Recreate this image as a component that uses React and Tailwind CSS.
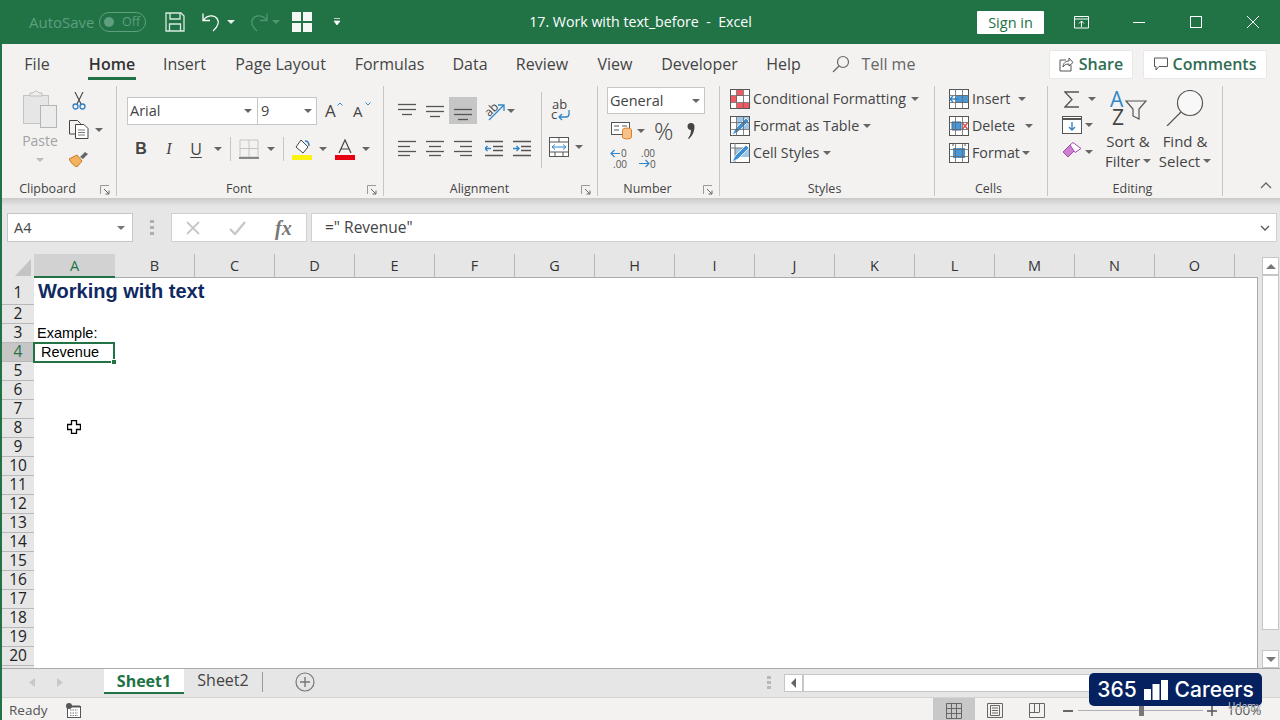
import React from 'react';

const Caret = ({ className = '', color = '#666' }) => (
  <svg width="8" height="4" viewBox="0 0 8 4" className={`shrink-0 ${className}`}>
    <path d="M0 0h8L4 4z" fill={color} />
  </svg>
);

const Launcher = () => (
  <svg width="10" height="10" viewBox="0 0 10 10" className="absolute right-[6px] top-[7px]">
    <path d="M0.5 9V0.5H9" fill="none" stroke="#999" />
    <path d="M4 4l5 5M9 5.5V9H5.5" fill="none" stroke="#666" />
  </svg>
);

const Group = ({ className, label, launcher, children }) => (
  <div className={`h-[110px] shrink-0 flex flex-col border-r border-[#c8c6c4] ${className}`}>
    <div className="h-[92px]">{children}</div>
    <div className={`h-[18px] relative text-center text-[12.5px] leading-[22px] text-[#444] ${launcher ? 'pr-[22px]' : 'pr-[5px]'}`}>
      {label}
      {launcher && <Launcher />}
    </div>
  </div>
);

const Lines = ({ rows }) => (
  <svg width="18" height="20" viewBox="0 0 18 20" className="shrink-0">
    {rows.map((r, i) => (
      <path key={i} d={`M${r[1]} ${r[0]}.5H${r[2]}`} stroke="#555" strokeWidth="1.3" />
    ))}
  </svg>
);

const Indent = ({ flip }) => (
  <svg width="18" height="20" viewBox="0 0 18 20" className="shrink-0">
    <path d="M0 3.5h18M8 8.5h10M8 12.5h10M0 17.5h18" stroke="#555" strokeWidth="1.3" />
    {flip ? (
      <path d="M0 10.5h6M3.5 8l2.5 2.5L3.5 13" fill="none" stroke="#2f86c8" strokeWidth="1.4" />
    ) : (
      <path d="M0 10.5h6M2.5 8L0 10.5 2.5 13" fill="none" stroke="#2f86c8" strokeWidth="1.4" />
    )}
  </svg>
);

const TableIcon = ({ children }) => (
  <svg width="20" height="20" viewBox="0 0 20 20" className="shrink-0">
    <rect x="0.500" y="0.500" width="19" height="19" fill="#fff" stroke="#555" />
    {children}
    <path d="M0 6.500h20M0 13.500h20M6.500 0v20M13.500 0v20" stroke="#666" strokeOpacity="0.8" />
  </svg>
);

const Brush = () => (
  <path d="M2 19l3-6L16 2l3 3L8 16z" fill="#3f8fd2" stroke="#fff" strokeWidth="0.8" />
);

const StyleRow = ({ icon, children }) => (
  <div className="h-[25px] mb-[2px] flex items-center text-[14.25px] text-[#444] whitespace-nowrap">
    {icon}
    {children}
  </div>
);

const TopBar = () => (
  <div className="h-[44px] bg-[#217346] flex items-center text-white">
    <span className="ml-[29px] w-[62px] text-[15px] text-[#5d9f7e] whitespace-nowrap">AutoSave</span>
    <div className="ml-[8px] w-[47px] h-[20px] rounded-full border border-[#5d9f7e] flex items-center text-[12.5px] text-[#5d9f7e]">
      <span className="ml-[4px] w-[10px] h-[10px] rounded-full bg-[#5d9f7e]" />
      <span className="ml-[8px]">Off</span>
    </div>
    <svg width="20" height="20" viewBox="0 0 20 20" className="ml-[19px]">
      <path d="M1 1h15l3 3v15H1z" fill="none" stroke="#d8ebe1" strokeWidth="1.3" />
      <path d="M5 1v6h10V1M4.500 19v-7h11v7" fill="none" stroke="#d8ebe1" strokeWidth="1.3" />
    </svg>
    <svg width="20" height="20" viewBox="0 0 20 20" className="ml-[17px]">
      <path d="M1 1.500v7h7M1.500 8C5 3 12 2.500 15 6.500c2.500 3.500 1 8-4 12.500" fill="none" stroke="#fff" strokeWidth="1.3" />
    </svg>
    <Caret color="#e8f2ec" className="ml-[5px]" />
    <svg width="20" height="20" viewBox="0 0 20 20" className="ml-[13px]">
      <path d="M19 1.500v7h-7M18.500 8C15 3 8 2.500 5 6.500c-2.500 3.500-1 8 4 12.500" fill="none" stroke="#4f9672" strokeWidth="1.3" />
    </svg>
    <Caret color="#4f9672" className="ml-[4px]" />
    <svg width="20" height="20" viewBox="0 0 20 20" className="ml-[12px]">
      <path d="M0 0h9v9H0zM11 0h9v9h-9zM0 11h9v9H0zM11 11h9v9h-9z" fill="#f4f8f5" />
    </svg>
    <svg width="8" height="8" viewBox="0 0 8 8" className="ml-[21px]">
      <path d="M1 0.500h6M1 3h6l-3 4z" fill="#fff" stroke="#fff" strokeWidth="0.7" />
    </svg>
    <span className="ml-[188px] -mt-[1px] w-[223px] text-[14.2px] whitespace-pre text-center">17. Work with text_before  -  Excel</span>
    <div className="ml-[225px] mt-[1px] w-[67px] h-[23px] bg-white text-[#217346] text-[14.5px] flex items-center justify-center rounded-[1px]">Sign in</div>
    <svg width="15" height="13" viewBox="0 0 15 13" className="ml-[30px]">
      <path d="M0.500 0.500h14v11.500h-14zM0.500 3h14M7.500 11V5M5 7.500l2.500-2.500L10 7.500" fill="none" stroke="#fff" />
    </svg>
    <div className="ml-[44px] w-[12px] h-px bg-white" />
    <div className="ml-[45px] w-[12px] h-[12px] border border-white" />
    <svg width="12" height="12" viewBox="0 0 12 12" className="ml-[45px]">
      <path d="M0 0l12 12M12 0L0 12" stroke="#fff" />
    </svg>
  </div>
);

const TabLabel = ({ className, children }) => (
  <span className={`flex justify-center whitespace-nowrap ${className}`}>{children}</span>
);

const TabRow = () => (
  <div className="h-[40px] bg-[#f3f2f1] flex items-center text-[16px] text-[#444]">
    <TabLabel className="ml-[24px] w-[26px]">File</TabLabel>
    <div className="ml-[38px] w-[48px] h-full relative flex items-center justify-center font-semibold text-[#333]">
      Home
      <span className="absolute left-0 right-0 bottom-[4px] h-[3px] bg-[#217346]" />
    </div>
    <TabLabel className="ml-[27px] w-[43px]">Insert</TabLabel>
    <TabLabel className="ml-[28px] w-[93px]">Page Layout</TabLabel>
    <TabLabel className="ml-[28px] w-[69px]">Formulas</TabLabel>
    <TabLabel className="ml-[28px] w-[36px]">Data</TabLabel>
    <TabLabel className="ml-[28px] w-[52px]">Review</TabLabel>
    <TabLabel className="ml-[29px] w-[36px]">View</TabLabel>
    <TabLabel className="ml-[28px] w-[77px]">Developer</TabLabel>
    <TabLabel className="ml-[28px] w-[35px]">Help</TabLabel>
    <svg width="18" height="18" viewBox="0 0 18 18" className="ml-[31px]">
      <circle cx="11" cy="7" r="5.500" fill="none" stroke="#666" strokeWidth="1.2" />
      <path d="M7 11l-6 6" stroke="#666" strokeWidth="1.2" />
    </svg>
    <TabLabel className="ml-[10px] w-[57px] text-[#666]">Tell me</TabLabel>
    <div className="ml-[132px] w-[84px] h-[29px] bg-white border border-[#e8e8e8] rounded-[2px] flex items-center justify-center gap-[5px] font-semibold text-[#2f6d52]">
      <svg width="15" height="15" viewBox="0 0 15 15">
        <path d="M7 3H1v11h11V8" fill="none" stroke="#555" />
        <path d="M4 10c0-4 3-6 6-6V1l4 4.500L10 9V7c-3 0-5 1-6 3z" fill="none" stroke="#555" />
      </svg>
      Share
    </div>
    <div className="ml-[10px] w-[124px] h-[29px] bg-white border border-[#e8e8e8] rounded-[2px] flex items-center justify-center gap-[5px] font-semibold text-[#2f6d52]">
      <svg width="14" height="14" viewBox="0 0 14 14">
        <path d="M0.500 1h13v8.500H5L2 13V9.500H0.500z" fill="none" stroke="#555" />
      </svg>
      Comments
    </div>
  </div>
);

const Ribbon = () => (
  <div className="h-[114px] bg-[#f3f2f1] flex pt-[2px] pl-[1px] text-[#444]">
    <Group className="w-[116px]" label="Clipboard" launcher>
      <div className="flex">
        <div className="ml-[19px] w-[40px] flex flex-col items-center pt-[4px]">
          <svg width="34" height="38" viewBox="0 0 34 38">
            <rect x="0.500" y="5.500" width="25" height="28" fill="#e6e6e6" stroke="#c4c4c4" />
            <path d="M7 6V3h3q3-4 6 0h3v3z" fill="#efefef" stroke="#bdbdbd" />
            <rect x="17.500" y="15.500" width="16" height="22" fill="#ececec" stroke="#b4b4b4" />
          </svg>
          <span className="mt-[3px] h-[20px] text-[14px] leading-[20px] text-[#a3a3a3]">Paste</span>
          <Caret color="#bbb" className="mt-[7px]" />
        </div>
        <div className="ml-[9px] flex flex-col pt-[6px]">
          <svg width="14" height="18" viewBox="0 0 14 18" className="ml-[3px]">
            <path d="M3 0l6 12M11 0L5 12" stroke="#444" strokeWidth="1.1" />
            <circle cx="3.500" cy="14.500" r="2.500" fill="none" stroke="#2f7fc4" strokeWidth="1.3" />
            <circle cx="10.500" cy="14.500" r="2.500" fill="none" stroke="#2f7fc4" strokeWidth="1.3" />
          </svg>
          <div className="mt-[10px] flex items-center">
            <svg width="20" height="19" viewBox="0 0 20 19">
              <path d="M0.500 0.500h8l3 3V5M0.500 0.500V14H6" fill="none" stroke="#444" />
              <path d="M6.500 4.500H15l4 4v10H6.500z" fill="#fff" stroke="#444" />
              <path d="M9 10h7M9 12.500h7M9 15h7" stroke="#777" />
            </svg>
            <Caret className="ml-[6px]" />
          </div>
          <svg width="20" height="18" viewBox="0 0 20 18" className="mt-[10px]">
            <path d="M0 10l8-4 5 6-5 6C5 17 2 14 0 10z" fill="#f2b25e" stroke="#c77a26" />
            <path d="M11 8l5-5 3 2-5 5z" fill="#666" />
          </svg>
        </div>
      </div>
    </Group>

    <Group className="w-[267px]" label="Font" launcher>
      <div className="flex pt-[11px] pl-[10px] h-[39px]">
        <div className="w-[131px] h-[28px] bg-white border border-[#c6c6c6] flex items-center justify-between pl-[2px] pr-[5px] text-[14.5px]">
          Arial
          <Caret />
        </div>
        <div className="-ml-px w-[60px] h-[28px] bg-white border border-[#c6c6c6] flex items-center justify-between pl-[3px] pr-[4px] text-[14.5px]">
          9
          <Caret />
        </div>
        <div className="ml-[8px] w-[18px] h-[28px] relative text-[17px] leading-[28px]">
          A
          <svg width="6" height="4" viewBox="0 0 6 4" className="absolute right-0 top-[5px]">
            <path d="M0.500 3.500L3 1l2.500 2.500" fill="none" stroke="#2f86c8" />
          </svg>
        </div>
        <div className="ml-[10px] w-[18px] h-[28px] relative text-[15px] leading-[29px]">
          A
          <svg width="6" height="4" viewBox="0 0 6 4" className="absolute right-0 top-[5px]">
            <path d="M0.500 0.500L3 3l2.500-2.500" fill="none" stroke="#2f86c8" />
          </svg>
        </div>
      </div>
      <div className="mt-[12px] h-[24px] pl-[10px] flex items-center text-[16px]">
        <span className="w-[28px] text-center font-bold [font-family:'Liberation_Sans',sans-serif]">B</span>
        <span className="w-[28px] text-center italic [font-family:'Liberation_Serif',serif]">I</span>
        <span className="w-[26px] text-center underline underline-offset-2">U</span>
        <Caret className="ml-[5px]" />
        <div className="ml-[8px] w-px h-[24px] bg-[#c8c6c4]" />
        <svg width="20" height="20" viewBox="0 0 20 20" className="ml-[8px]">
          <path d="M1 1h18v17H1zM10 1v17M1 9.500h18" fill="none" stroke="#c4c4c4" />
          <path d="M0 19h20" stroke="#666" strokeWidth="1.500" />
        </svg>
        <Caret className="ml-[8px]" />
        <div className="ml-[8px] w-px h-[24px] bg-[#c8c6c4]" />
        <svg width="20" height="21" viewBox="0 0 20 21" className="ml-[8px]">
          <path d="M9 1l7 7-5 6-7-6z" fill="#fff" stroke="#444" />
          <path d="M13 2c3 0 4 2 4 5" fill="none" stroke="#2f7fc4" strokeWidth="1.500" />
          <rect x="0" y="16" width="20" height="5" fill="#fdf112" />
        </svg>
        <Caret className="ml-[7px]" />
        <svg width="20" height="21" viewBox="0 0 20 21" className="ml-[8px]">
          <path d="M4 14L10 1l6 13M6 10h8" fill="none" stroke="#444" strokeWidth="1.200" />
          <rect x="0" y="16" width="20" height="5" fill="#e60012" />
        </svg>
        <Caret className="ml-[7px]" />
      </div>
    </Group>

    <Group className="w-[214px]" label="Alignment" launcher>
      <div className="flex">
        <div className="w-[157px] shrink-0">
          <div className="h-[27px] mt-[11px] pl-[14px] flex items-center">
            <Lines rows={[[3, 0, 18], [8, 0, 18], [13, 4, 14]]} />
            <div className="ml-[10px]"><Lines rows={[[5, 0, 18], [10, 0, 18], [15, 4, 14]]} /></div>
            <div className="ml-[5px] w-[28px] h-[27px] bg-[#c6c6c6] flex items-center justify-center">
              <Lines rows={[[8, 0, 18], [13, 0, 18], [18, 4, 14]]} />
            </div>
            <svg width="21" height="22" viewBox="0 0 21 22" className="ml-[7px]">
              <text x="1" y="15" fontSize="12" fill="#444" fontFamily="Open Sans" transform="rotate(-45 6 11)">ab</text>
              <path d="M5 20L19 6M14 5h6v6" fill="none" stroke="#2f86c8" strokeWidth="1.300" />
            </svg>
            <Caret className="ml-[2px]" />
          </div>
          <div className="h-[20px] mt-[14px] pl-[14px] flex items-center">
            <Lines rows={[[3, 0, 18], [8, 0, 12], [13, 0, 18], [17, 0, 12]]} />
            <div className="ml-[10px]"><Lines rows={[[3, 0, 18], [8, 3, 15], [13, 0, 18], [17, 3, 15]]} /></div>
            <div className="ml-[10px]"><Lines rows={[[3, 0, 18], [8, 6, 18], [13, 0, 18], [17, 6, 18]]} /></div>
            <div className="ml-[13px]"><Indent /></div>
            <div className="ml-[10px]"><Indent flip /></div>
          </div>
        </div>
        <div className="mt-[6px] w-px h-[76px] bg-[#c8c6c4] shrink-0" />
        <div className="flex-1">
          <svg width="20" height="24" viewBox="0 0 20 24" className="ml-[9px] mt-[12px]">
            <text x="1" y="11" fontSize="13" fill="#444" fontFamily="Open Sans">ab</text>
            <text x="0" y="21" fontSize="13" fill="#444" fontFamily="Open Sans">c</text>
            <path d="M18 12v4q0 3-3 3H8M11 16l-3 3 3 3" fill="none" stroke="#2f86c8" strokeWidth="1.300" />
          </svg>
          <div className="mt-[15px] ml-[7px] flex items-center">
            <svg width="20" height="20" viewBox="0 0 20 20" className="shrink-0">
              <rect x="0.500" y="0.500" width="19" height="19" fill="#fff" stroke="#555" />
              <path d="M0 5h20M0 15h20M10 0v5M6 15v5M14 15v5" stroke="#555" />
              <path d="M3 10h14M6 7.500L3 10l3 2.500M14 7.500l3 2.500-3 2.500" fill="none" stroke="#2f86c8" />
            </svg>
            <Caret className="ml-[6px]" />
          </div>
        </div>
      </div>
    </Group>

    <Group className="w-[122px]" label="Number" launcher>
      <div className="ml-[9px] mt-px w-[98px] h-[27px] bg-white border border-[#c6c6c6] flex items-center justify-between pl-[2px] pr-[4px] text-[14.5px]">
        General
        <Caret />
      </div>
      <div className="mt-[7px] h-[20px] flex items-center">
        <svg width="21" height="18" viewBox="0 0 21 18" className="ml-[13px]">
          <rect x="0.500" y="0.500" width="18" height="12" fill="#fff" stroke="#555" />
          <path d="M3 4h5M3 8h5M11 4h5" stroke="#555" />
          <ellipse cx="16" cy="8" rx="4.500" ry="2" fill="#f7c28a" stroke="#d9822b" />
          <path d="M11.500 8v7c0 2.500 9 2.500 9 0V8" fill="#f7c28a" stroke="#d9822b" />
        </svg>
        <Caret className="ml-[5px]" />
        <span className="ml-[9px] w-[20px] text-[24px] leading-[20px] font-light text-[#444]">%</span>
        <svg width="8" height="17" viewBox="0 0 8 17" className="ml-[13px]">
          <path d="M0.500 3.500a3.500 3.500 0 1 1 7 0C7.500 9 5 13 2 16l-1-.7C3 13 4 10 4 7 2 7 .5 5.500.5 3.500z" fill="#444" />
        </svg>
      </div>
      <div className="mt-[7px] flex items-center">
        <svg width="20" height="21" viewBox="0 0 20 21" className="ml-[12px]">
          <path d="M1 5.500h9M4.500 2L1 5.500 4.500 9" fill="none" stroke="#2f86c8" strokeWidth="1.200" />
          <text x="11" y="9" fontSize="10" fill="#555" fontFamily="Open Sans">0</text>
          <text x="3" y="20" fontSize="10" fill="#555" fontFamily="Open Sans">.00</text>
        </svg>
        <svg width="20" height="21" viewBox="0 0 20 21" className="ml-[8px]">
          <text x="3" y="9" fontSize="10" fill="#555" fontFamily="Open Sans">.00</text>
          <path d="M1 15.500h10M7.500 12l3.500 3.500L7.500 19" fill="none" stroke="#2f86c8" strokeWidth="1.200" />
          <text x="12" y="20" fontSize="10" fill="#555" fontFamily="Open Sans">0</text>
        </svg>
      </div>
    </Group>

    <Group className="w-[215px]" label="Styles">
      <div className="pl-[10px]">
        <StyleRow icon={<TableIcon><path d="M7 1h6v6H7zM1 7h6v6H1zM7 14h12v5H7z" fill="#f0595f" /></TableIcon>}>
          <span className="ml-[3px] mr-[5px]">Conditional Formatting</span>
          <Caret />
        </StyleRow>
        <StyleRow icon={<TableIcon><path d="M7 1h12v6H7zM7 7h12v6H7z" fill="#9fc6e8" /><Brush /></TableIcon>}>
          <span className="ml-[3px] mr-[4px]">Format as Table</span>
          <Caret />
        </StyleRow>
        <StyleRow icon={<svg width="20" height="20" viewBox="0 0 20 20" className="shrink-0"><rect x="0.500" y="0.500" width="19" height="19" fill="#fff" stroke="#555" /><path d="M5 5h14v9H5z" fill="#9fc6e8" /><path d="M0 5h20M5 0v20" stroke="#777" /><Brush /></svg>}>
          <span className="ml-[3px] mr-[4px]">Cell Styles</span>
          <Caret />
        </StyleRow>
      </div>
    </Group>

    <Group className="w-[113px]" label="Cells">
      <div className="pl-[14px]">
        <StyleRow icon={<TableIcon><path d="M7 6h12v8H7z" fill="#4a97d6" /><path d="M9 10H1M4 7l-3 3 3 3" fill="none" stroke="#2f86c8" strokeWidth="1.400" /></TableIcon>}>
          <span className="ml-[3px] w-[46px]">Insert</span>
          <Caret />
        </StyleRow>
        <StyleRow icon={<TableIcon><path d="M3 6h9v8H3z" fill="#4a97d6" stroke="#2f6da8" /><path d="M13.500 7l5 6M18.500 7l-5 6" stroke="#e05050" strokeWidth="1.500" /></TableIcon>}>
          <span className="ml-[3px] w-[53px]">Delete</span>
          <Caret />
        </StyleRow>
        <StyleRow icon={<TableIcon><path d="M4 5h12v10H4z" fill="#4a97d6" /><path d="M4 0v3M16 0v3" stroke="#555" /></TableIcon>}>
          <span className="ml-[3px] w-[50px]">Format</span>
          <Caret />
        </StyleRow>
      </div>
    </Group>

    <Group className="w-[175px]" label="Editing">
      <div className="flex">
        <div className="ml-[14px] w-[40px] shrink-0 flex flex-col pt-[4px]">
          <div className="h-[18px] flex items-center">
            <svg width="16" height="17" viewBox="0 0 16 17" className="ml-[2px]">
              <path d="M15 1H1l7 7.500L1 16h14" fill="none" stroke="#555" strokeWidth="1.300" />
            </svg>
            <Caret className="ml-[8px]" />
          </div>
          <div className="h-[18px] mt-[8px] flex items-center">
            <svg width="20" height="18" viewBox="0 0 20 18">
              <rect x="0.500" y="0.500" width="19" height="17" fill="#fff" stroke="#555" />
              <path d="M0 3h20" stroke="#555" strokeWidth="2" />
              <path d="M10 6v8M7 11l3 3 3-3" fill="none" stroke="#2f7fc4" strokeWidth="1.300" />
            </svg>
            <Caret className="ml-[3px]" />
          </div>
          <div className="h-[20px] mt-[8px] flex items-center">
            <svg width="20" height="20" viewBox="0 0 20 20">
              <path d="M1 10l7-7 5 5-7 7z" fill="#cf7fd3" stroke="#a24ca8" />
              <path d="M8 3l3-2.500 8 6-6 4-5-7.500z" fill="#fff" stroke="#a24ca8" />
            </svg>
            <Caret className="ml-[3px]" />
          </div>
        </div>
        <div className="w-[52px] shrink-0 flex flex-col items-center pt-[4px]">
          <svg width="38" height="36" viewBox="0 0 38 36">
            <text x="1" y="17" fontSize="21" fill="#2f86c8" fontFamily="Open Sans">A</text>
            <text x="3" y="35" fontSize="21" fill="#444" fontFamily="Open Sans">Z</text>
            <path d="M17 11h20l-7 8v10l-6-3v-7z" fill="#f3f2f1" stroke="#555" strokeWidth="1.200" />
          </svg>
          <span className="mt-[5px] text-[15px] leading-[20px] whitespace-nowrap">Sort &amp;</span>
          <span className="text-[15px] leading-[20px] whitespace-nowrap flex items-center gap-[3px]">Filter <Caret /></span>
        </div>
        <div className="ml-[3px] w-[56px] shrink-0 flex flex-col items-center pt-[4px]">
          <svg width="38" height="36" viewBox="0 0 38 36">
            <circle cx="24" cy="13" r="12.500" fill="#f8f8f8" stroke="#555" strokeWidth="1.200" />
            <path d="M15 22L1 36" stroke="#555" strokeWidth="1.200" />
          </svg>
          <span className="mt-[5px] text-[15px] leading-[20px] whitespace-nowrap">Find &amp;</span>
          <span className="text-[15px] leading-[20px] whitespace-nowrap flex items-center gap-[3px]">Select <Caret /></span>
        </div>
      </div>
    </Group>

    <div className="flex-1 flex justify-end items-end pb-[9px] pr-[8px]">
      <svg width="12" height="7" viewBox="0 0 12 7">
        <path d="M1 6l5-5 5 5" fill="none" stroke="#666" strokeWidth="1.300" />
      </svg>
    </div>
  </div>
);

const FormulaBar = () => (
  <div className="h-[56px] bg-[#e6e6e6] relative">
    <div className="h-[8px] bg-gradient-to-b from-[#c9c9c9] to-[#e6e6e6]" />
    <div className="mt-[7px] h-[29px] flex">
      <div className="ml-[7px] w-[126px] bg-white border border-[#c6c6c6] flex items-center justify-between pl-[6px] pr-[7px] text-[14.5px] text-[#444]">
        A4
        <Caret color="#777" />
      </div>
      <div className="ml-[17px] w-[4px] flex flex-col justify-center gap-[3px]">
        <span className="h-[3px] bg-[#b0b0b0]" />
        <span className="h-[3px] bg-[#b0b0b0]" />
        <span className="h-[3px] bg-[#b0b0b0]" />
      </div>
      <div className="ml-[17px] w-[136px] bg-white border border-[#d0d0d0] flex items-center">
        <svg width="14" height="14" viewBox="0 0 14 14" className="ml-[14px]">
          <path d="M1 1l12 12M13 1L1 13" stroke="#c8c8c8" strokeWidth="1.800" />
        </svg>
        <svg width="17" height="14" viewBox="0 0 17 14" className="ml-[29px]">
          <path d="M1 8l5 5L16 1" fill="none" stroke="#c8c8c8" strokeWidth="2.400" />
        </svg>
        <span className="ml-[29px] text-[20px] italic font-bold text-[#777] [font-family:'Liberation_Serif',serif]">fx</span>
      </div>
      <div className="ml-[4px] w-[966px] bg-white border border-[#d0d0d0] flex items-center justify-between pl-[13px] pr-[6px] text-[15.5px] text-[#444] whitespace-pre">
        =" Revenue"
        <svg width="10" height="6" viewBox="0 0 10 6">
          <path d="M1 1l4 4 4-4" fill="none" stroke="#555" strokeWidth="1.300" />
        </svg>
      </div>
    </div>
  </div>
);

const COLS = ['B', 'C', 'D', 'E', 'F', 'G', 'H', 'I', 'J', 'K', 'L', 'M', 'N', 'O'];
const ROWS = Array.from({ length: 19 }, (_, i) => i + 2);

const Sheet = () => (
  <div className="h-[414px] flex bg-[#e6e6e6]">
    <div className="w-[1258px] shrink-0 flex flex-col">
      {/* column letters */}
      <div className="h-[24px] flex">
        <div className="w-[34px] h-full flex items-end justify-end pr-[3px] pb-[2px]">
          <svg width="16" height="17" viewBox="0 0 16 17">
            <path d="M16 0v17H0z" fill="#c4c4c4" />
          </svg>
        </div>
        <div className="w-[81px] h-full pt-[1px] bg-[#d2d2d2] border-b-2 border-[#217346] flex items-center justify-center text-[14.5px] text-[#217346]">A</div>
        {COLS.map(c => (
          <div key={c} className="w-[80px] h-full pt-[1px] border-r border-[#b8b8b8] border-b border-b-[#ababab] flex items-center justify-center text-[14.5px] text-[#333]">{c}</div>
        ))}
        <div className="flex-1 border-b border-[#ababab]" />
      </div>
      <div className="h-[390px] flex relative">
        <div className="w-[34px] shrink-0 flex flex-col text-[15.5px] text-[#222]">
          <div className="h-[27px] border-b border-[#b8b8b8] pl-[2px] flex items-end justify-center leading-[24px]">1</div>
          {ROWS.map(r => (
            <div key={r} className={`h-[19px] border-b border-[#b8b8b8] pl-[2px] flex items-center justify-center ${r === 4 ? 'bg-[#c6c6c6] text-[#217346]' : ''}`}>{r}</div>
          ))}
        </div>
        <div className="flex-1 bg-white border-r border-[#ababab] text-[14.5px] text-black [font-family:'Liberation_Sans',sans-serif]">
          <div className="h-[26px] pl-[4px] flex items-center text-[20px] font-bold text-[#0f2a62] whitespace-nowrap">Working with text</div>
          <div className="h-[19px]" />
          <div className="h-[19px] pl-[3px] flex items-end leading-[18px]">Example:</div>
          <div className="-ml-px w-[82px] h-[21px] border-2 border-[#217346] relative flex items-center pl-[6px] whitespace-pre">
            Revenue
            <span className="absolute -right-[3px] -bottom-[3px] w-[5px] h-[5px] bg-[#217346] border-l border-t border-white" />
          </div>
        </div>
        {/* mouse cursor */}
        <svg width="14" height="14" viewBox="0 0 14 14" className="absolute left-[67px] top-[142px]">
          <path d="M4.500 0.500h5v4h4v5h-4v4h-5v-4h-4v-5h4z" fill="#fff" stroke="#000" strokeWidth="1.300" />
        </svg>
      </div>
    </div>
    {/* vertical scrollbar */}
    <div className="flex-1 pl-[4px] pt-[3px] flex flex-col">
      <div className="w-[17px] h-[18px] bg-white border border-[#c6c6c6] flex items-center justify-center">
        <svg width="10" height="5" viewBox="0 0 10 5"><path d="M5 0l5 5H0z" fill="#777" /></svg>
      </div>
      <div className="w-[17px] h-[355px] bg-white border border-[#c6c6c6]" />
      <div className="h-[20px]" />
      <div className="w-[17px] h-[18px] bg-white border border-[#c6c6c6] flex items-center justify-center">
        <svg width="10" height="5" viewBox="0 0 10 5"><path d="M5 5l5-5H0z" fill="#777" /></svg>
      </div>
    </div>
  </div>
);

const SheetTabs = () => (
  <div className="h-[29px] bg-[#e6e6e6] border-t border-[#ababab] flex items-start">
    <svg width="6" height="9" viewBox="0 0 6 9" className="ml-[29px] mt-[9px]"><path d="M6 0v9L0 4.500z" fill="#c8c8c8" /></svg>
    <svg width="6" height="9" viewBox="0 0 6 9" className="ml-[22px] mt-[9px]"><path d="M0 0v9l6-4.500z" fill="#c8c8c8" /></svg>
    <div className="ml-[41px] w-[80px] h-[25px] bg-white border-b-2 border-[#217346] flex items-center justify-center text-[16px] font-bold text-[#217346]">Sheet1</div>
    <div className="w-[78px] h-[22px] flex items-center justify-center text-[16px] text-[#444]">Sheet2</div>
    <div className="mt-[3px] w-px h-[20px] bg-[#9a9a9a]" />
    <svg width="20" height="20" viewBox="0 0 20 20" className="ml-[32px] mt-[3px]">
      <circle cx="10" cy="10" r="9" fill="none" stroke="#777" strokeWidth="1.200" />
      <path d="M10 5v10M5 10h10" stroke="#777" strokeWidth="1.400" />
    </svg>
    <div className="ml-[452px] mt-[7px] w-[4px] flex flex-col gap-[2px]">
      <span className="h-[3px] bg-[#b8b8b8]" />
      <span className="h-[3px] bg-[#b8b8b8]" />
      <span className="h-[3px] bg-[#b8b8b8]" />
    </div>
    <div className="ml-[13px] mt-[5px] w-[19px] h-[18px] bg-white border border-[#c6c6c6] flex items-center justify-center">
      <svg width="5" height="10" viewBox="0 0 5 10"><path d="M5 0v10L0 5z" fill="#666" /></svg>
    </div>
    <div className="mt-[5px] w-[290px] h-[18px] bg-white border border-[#c6c6c6]" />
  </div>
);

const StatusBar = () => (
  <div className="h-[23px] pt-[3px] bg-[#f3f2f1] border-t border-[#d4d4d4] flex items-center text-[13.5px] text-[#555]">
    <span className="ml-[9px] w-[37px]">Ready</span>
    <svg width="15" height="15" viewBox="0 0 15 15" className="ml-[20px]">
      <rect x="1.500" y="3.500" width="13" height="11" fill="#fff" stroke="#555" />
      <path d="M2 3.500h12" stroke="#555" strokeWidth="2" />
      <path d="M4 7h8M4 10h8M4 12.500h8" stroke="#777" strokeDasharray="1.500 1" />
      <circle cx="3" cy="3" r="3" fill="#555" />
    </svg>
    <div className="ml-[852px] -mt-[3px] w-[42px] h-[23px] pt-[3px] bg-[#c8c8c8] flex items-center justify-center">
      <svg width="16" height="16" viewBox="0 0 16 16">
        <path d="M0.500 0.500h15v15H0.500zM5.500 0v16M10.500 0v16M0 5.500h16M0 10.500h16" fill="none" stroke="#666" />
      </svg>
    </div>
    <svg width="16" height="15" viewBox="0 0 16 15" className="ml-[12px]">
      <path d="M0.500 0.500h15v14H0.500z" fill="none" stroke="#666" />
      <path d="M3.500 2.500h9v10h-9zM5 5h6M5 7.500h6M5 10h6" fill="none" stroke="#666" />
    </svg>
    <svg width="16" height="15" viewBox="0 0 16 15" className="ml-[26px]">
      <path d="M0.500 0.500h15v14H0.500zM0 9.500h10M5.500 0v9.500M10.500 0v9.500" fill="none" stroke="#666" />
    </svg>
    <div className="ml-[18px] w-[10px] h-[2px] bg-[#666]" />
    <div className="ml-[5px] w-[61px] h-px bg-[#b0b0b0]" />
    <div className="w-[5px] h-[11px] bg-[#777]" />
    <div className="w-[59px] h-px bg-[#b0b0b0]" />
    <svg width="10" height="10" viewBox="0 0 10 10" className="ml-[4px]"><path d="M5 0v10M0 5h10" stroke="#555" strokeWidth="1.500" /></svg>
    <span className="ml-[10px]">100%</span>
  </div>
);

export default function App() {
  return (
    <div className="w-[1280px] h-[720px] overflow-hidden relative [font-family:'Open_Sans','Noto_Sans',sans-serif]">
      <TopBar />
      <TabRow />
      <Ribbon />
      <FormulaBar />
      <Sheet />
      <SheetTabs />
      <StatusBar />
      {/* window edge */}
      <div className="absolute left-0 top-0 bottom-0 w-[2px] bg-[#217346]" />
      {/* course watermark */}
      <div className="absolute left-[1089px] top-[673px] w-[173px] h-[33px] rounded-[5px] bg-[#06215f] flex items-center justify-center text-white text-[21px] font-medium [font-family:Inter,sans-serif]">
        365
        <svg width="24" height="20" viewBox="0 0 24 20" className="mx-[7px]">
          <path d="M0 9h7v11H0zM8.500 4h7v16h-7zM17 0h7v20h-7z" fill="#fff" />
        </svg>
        Careers
      </div>
      <span className="absolute left-[1228px] top-[699px] text-[10px] text-[#c8c8c8]">Udemy</span>
    </div>
  );
}
